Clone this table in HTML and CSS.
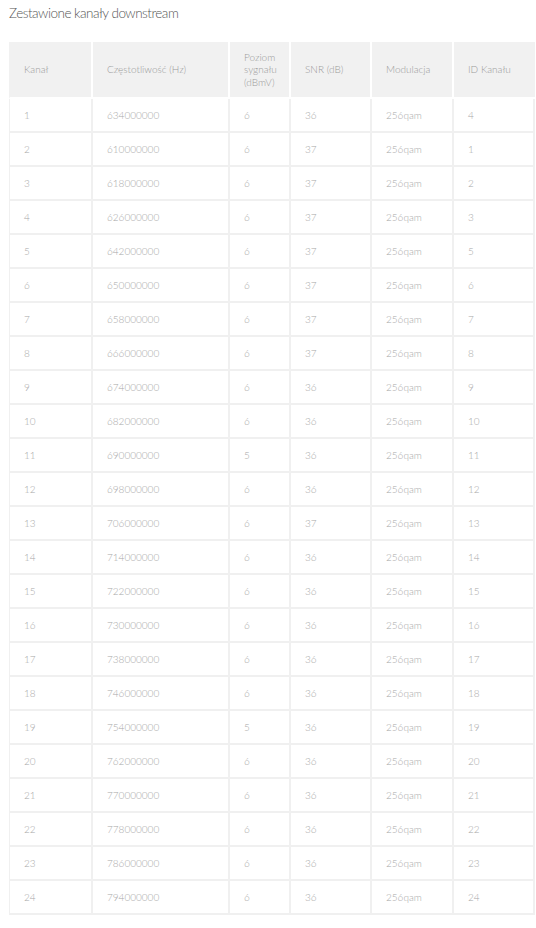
FILE: index.html
```html
<!DOCTYPE html>
<html lang="pl">
<head>
<meta charset="utf-8">
<title>Zestawione kanały downstream</title>
<link rel="stylesheet" href="styles.css">
</head>
<body>
<div class="page">
  <h1 class="title">Zestawione kanały downstream</h1>
  <table class="channels">
    <colgroup>
      <col class="c1"><col class="c2"><col class="c3"><col class="c4"><col class="c5"><col class="c6">
    </colgroup>
    <thead>
      <tr>
        <th>Kanał</th>
        <th>Częstotliwość (Hz)</th>
        <th>Poziom<br>sygnału<br>(dBmV)</th>
        <th>SNR (dB)</th>
        <th>Modulacja</th>
        <th>ID Kanału</th>
      </tr>
    </thead>
    <tbody>
      <tr><td>1</td><td>634000000</td><td>6</td><td>36</td><td>256qam</td><td>4</td></tr>
      <tr><td>2</td><td>610000000</td><td>6</td><td>37</td><td>256qam</td><td>1</td></tr>
      <tr><td>3</td><td>618000000</td><td>6</td><td>37</td><td>256qam</td><td>2</td></tr>
      <tr><td>4</td><td>626000000</td><td>6</td><td>37</td><td>256qam</td><td>3</td></tr>
      <tr><td>5</td><td>642000000</td><td>6</td><td>37</td><td>256qam</td><td>5</td></tr>
      <tr><td>6</td><td>650000000</td><td>6</td><td>37</td><td>256qam</td><td>6</td></tr>
      <tr><td>7</td><td>658000000</td><td>6</td><td>37</td><td>256qam</td><td>7</td></tr>
      <tr><td>8</td><td>666000000</td><td>6</td><td>37</td><td>256qam</td><td>8</td></tr>
      <tr><td>9</td><td>674000000</td><td>6</td><td>36</td><td>256qam</td><td>9</td></tr>
      <tr><td>10</td><td>682000000</td><td>6</td><td>36</td><td>256qam</td><td>10</td></tr>
      <tr><td>11</td><td>690000000</td><td>5</td><td>36</td><td>256qam</td><td>11</td></tr>
      <tr><td>12</td><td>698000000</td><td>6</td><td>36</td><td>256qam</td><td>12</td></tr>
      <tr><td>13</td><td>706000000</td><td>6</td><td>37</td><td>256qam</td><td>13</td></tr>
      <tr><td>14</td><td>714000000</td><td>6</td><td>36</td><td>256qam</td><td>14</td></tr>
      <tr><td>15</td><td>722000000</td><td>6</td><td>36</td><td>256qam</td><td>15</td></tr>
      <tr><td>16</td><td>730000000</td><td>6</td><td>36</td><td>256qam</td><td>16</td></tr>
      <tr><td>17</td><td>738000000</td><td>6</td><td>36</td><td>256qam</td><td>17</td></tr>
      <tr><td>18</td><td>746000000</td><td>6</td><td>36</td><td>256qam</td><td>18</td></tr>
      <tr><td>19</td><td>754000000</td><td>5</td><td>36</td><td>256qam</td><td>19</td></tr>
      <tr><td>20</td><td>762000000</td><td>6</td><td>36</td><td>256qam</td><td>20</td></tr>
      <tr><td>21</td><td>770000000</td><td>6</td><td>36</td><td>256qam</td><td>21</td></tr>
      <tr><td>22</td><td>778000000</td><td>6</td><td>36</td><td>256qam</td><td>22</td></tr>
      <tr><td>23</td><td>786000000</td><td>6</td><td>36</td><td>256qam</td><td>23</td></tr>
      <tr><td>24</td><td>794000000</td><td>6</td><td>36</td><td>256qam</td><td>24</td></tr>
    </tbody>
  </table>
</div>
</body>
</html>
```
FILE: styles.css
```css
html, body {
  margin: 0;
  padding: 0;
  background: #ffffff;
}

.page {
  padding: 4px 0 0 9px;
  font-family: Lato, "Open Sans", "Liberation Sans", sans-serif;
  font-weight: 300;
}

.title {
  margin: 0 0 20px 0;
  font-size: 13.5px;
  font-weight: 300;
  line-height: 18px;
  color: #555555;
  letter-spacing: -0.5px;
}

.channels {
  width: 526px;
  table-layout: fixed;
  border-collapse: separate;
  border-spacing: 0;
  font-size: 10px;
  line-height: 12.5px;
}

.c1 { width: 84px; }
.c2 { width: 137px; }
.c3 { width: 61px; }
.c4 { width: 81px; }
.c5 { width: 82px; }
.c6 { width: 81px; }

.channels th {
  background: #f1f1f1;
  color: #9a9a9a;
  font-weight: 300;
  text-align: left;
  padding: 0 4px 0 14px;
  height: 57px;
  box-sizing: border-box;
  border-right: 2px solid #ffffff;
  border-bottom: 2px solid #ffffff;
  vertical-align: middle;
}

.channels th:last-child {
  border-right: none;
}

.channels td {
  color: #a8a8a8;
  padding: 0 4px 0 14px;
  height: 34px;
  box-sizing: border-box;
  border-right: 2px solid #f0f0f0;
  border-bottom: 2px solid #f0f0f0;
  vertical-align: middle;
}

.channels td:first-child {
  border-left: 1px solid #f0f0f0;
}

.channels th:first-child {
  border-left: 1px solid #f1f1f1;
}
```
